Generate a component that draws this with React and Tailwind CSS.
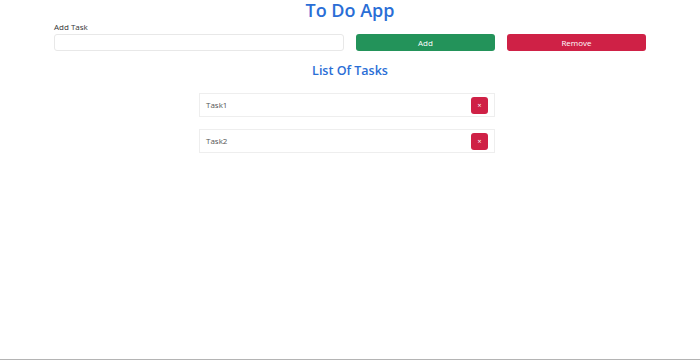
import React, { useState } from 'react';

const font = { fontFamily: '"Open Sans", "Noto Sans", sans-serif' };

const App = () => {
    const [task, setTask] = useState('');
    const [tasks, setTasks] = useState(['Task1', 'Task2']);

    const addTask = () => {
        if (!task.trim()) return;
        setTasks([...tasks, task.trim()]);
        setTask('');
    };

    return (
        <div style={font} className="h-[360px] bg-white border-b border-[#b4b4b4] box-border">
            <h1 className="text-center text-[18px] leading-[20px] font-semibold text-[#2a6ed6]">
                To Do App
            </h1>

            <div className="w-[592px] mx-auto mt-[2px]">
                <label className="block text-[8px] leading-[10px] text-[#333]">Add Task</label>
                <div className="flex gap-[12px] mt-[2px]">
                    <input
                        value={task}
                        onChange={(e) => setTask(e.target.value)}
                        className="w-[290px] h-[17px] border border-[#e8e8e8] rounded-[3px] px-2 text-[8px] outline-none"
                    />
                    <button
                        onClick={addTask}
                        className="w-[139px] h-[17px] rounded-[3px] bg-[#23935a] text-white text-[8px] leading-none"
                    >
                        Add
                    </button>
                    <button
                        onClick={() => setTasks([])}
                        className="w-[139px] h-[17px] rounded-[3px] bg-[#cf2146] text-white text-[8px] leading-none"
                    >
                        Remove
                    </button>
                </div>
            </div>

            <h2 className="text-center text-[12.5px] leading-[20px] font-semibold mt-[10px] text-[#2a6ed6]">List Of Tasks</h2>

            <div className="flex flex-col gap-[12px] w-[296px] mx-auto mt-[12px] -translate-x-[3px]">
                {tasks.map((t, i) => (
                    <div
                        key={i}
                        className="flex items-center justify-between h-[24px] border border-[#eeeeee] pl-[6px] pr-[6px]"
                    >
                        <span className="text-[8px] text-[#555]">{t}</span>
                        <button
                            onClick={() => setTasks(tasks.filter((_, j) => j !== i))}
                            className="w-[17px] h-[17px] rounded-[3px] bg-[#cf2146] text-white text-[7px] leading-none flex items-center justify-center"
                        >
                            ×
                        </button>
                    </div>
                ))}
            </div>
        </div>
    );
};

export default App;
